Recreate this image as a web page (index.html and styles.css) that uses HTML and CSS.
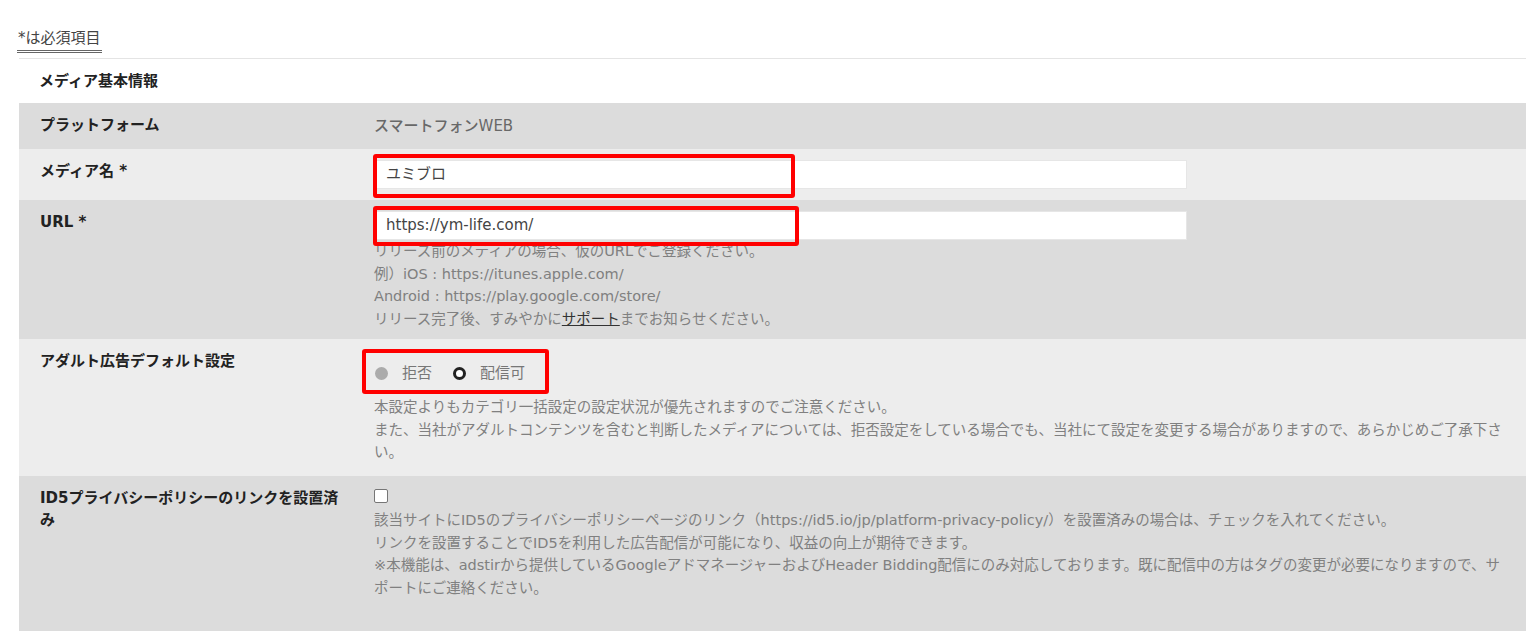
FILE: index.html
```html
<!DOCTYPE html>
<html lang="ja">
<head>
<meta charset="utf-8">
<title>メディア基本情報</title>
<link rel="stylesheet" href="styles.css">
</head>
<body>
<div class="page">
  <div class="note">*は必須項目</div>
  <div class="form">
    <div class="section-title">メディア基本情報</div>

    <div class="row dark">
      <div class="label">プラットフォーム</div>
      <div class="value plain">スマートフォンWEB</div>
    </div>

    <div class="row light">
      <div class="label">メディア名 *</div>
      <div class="value field">
        <div class="input">ユミブロ</div>
        <span class="mark mark-name"></span>
      </div>
    </div>

    <div class="row dark row-url">
      <div class="label">URL *</div>
      <div class="value field">
        <div class="input">https://ym-life.com/</div>
        <div class="help">
          <p>リリース前のメディアの場合、仮のURLでご登録ください。</p>
          <p>例）iOS : https://itunes.apple.com/</p>
          <p>Android : https://play.google.com/store/</p>
          <p>リリース完了後、すみやかに<a class="link">サポート</a>までお知らせください。</p>
        </div>
        <span class="mark mark-url"></span>
      </div>
    </div>

    <div class="row light row-adult">
      <div class="label">アダルト広告デフォルト設定</div>
      <div class="value field">
        <div class="radios">
          <span class="radio radio-off"></span><span class="radio-text">拒否</span>
          <span class="radio radio-on"></span><span class="radio-text">配信可</span>
        </div>
        <div class="help">
          <p>本設定よりもカテゴリ一括設定の設定状況が優先されますのでご注意ください。</p>
          <p>また、当社がアダルトコンテンツを含むと判断したメディアについては、拒否設定をしている場合でも、当社にて設定を変更する場合がありますので、あらかじめご了承下さい。</p>
        </div>
        <span class="mark mark-adult"></span>
      </div>
    </div>

    <div class="row dark row-id5">
      <div class="label">ID5プライバシーポリシーのリンクを設置済み</div>
      <div class="value field">
        <div class="check-line"><span class="checkbox"></span></div>
        <div class="help">
          <p>該当サイトにID5のプライバシーポリシーページのリンク（https://id5.io/jp/platform-privacy-policy/）を設置済みの場合は、チェックを入れてください。</p>
          <p>リンクを設置することでID5を利用した広告配信が可能になり、収益の向上が期待できます。</p>
          <p>※本機能は、adstirから提供しているGoogleアドマネージャーおよびHeader Bidding配信にのみ対応しております。既に配信中の方はタグの変更が必要になりますので、サポートにご連絡ください。</p>
        </div>
      </div>
    </div>
  </div>
</div>
</body>
</html>
```

FILE: styles.css
```css
* { box-sizing: border-box; }

body {
  margin: 0;
  background: #ffffff;
  font-family: "DejaVu Sans", "Noto Sans CJK JP", sans-serif;
  color: #222;
}

.page {
  display: flex;
  flex-direction: column;
  align-items: flex-start;
  padding: 28px 0 0 17px;
}

.note {
  font-size: 15px;
  line-height: 20px;
  color: #444;
  padding: 0 1px 2px 1px;
  border-bottom: 3px double #666;
}

.form {
  margin-top: 5px;
  margin-left: 2px;
  width: 1507px;
  border-top: 1px solid #e4e4e4;
}

.section-title {
  height: 44px;
  line-height: 44px;
  padding-left: 20px;
  font-size: 15px;
  font-weight: 700;
  color: #222;
  background: #fff;
}

.row {
  display: flex;
}

.row.dark { background: #dcdcdc; }
.row.light { background: #ededed; }

.label {
  flex: 0 0 355px;
  width: 355px;
  padding: 11px 29px 12px 21px;
  font-size: 15px;
  font-weight: 700;
  line-height: 22px;
  color: #222;
}

.value {
  flex: 1;
  min-width: 0;
  padding: 12px 20px 12px 0;
  font-size: 14.5px;
  line-height: 22px;
  color: #7c7c7c;
}

.value.plain {
  font-size: 15px;
  color: #686868;
  font-weight: 500;
}

.value.field {
  position: relative;
  padding-top: 11px;
  padding-bottom: 11px;
}

.input {
  width: 813px;
  height: 29px;
  padding-left: 11px;
  background: #fff;
  border: 1px solid #e6e6e6;
  font-size: 15px;
  line-height: 27px;
  color: #444;
}

.help p {
  margin: 0;
  font-size: 14.5px;
  line-height: 22.5px;
  color: #808080;
}

.link {
  color: #333;
  text-decoration: underline;
}

.row-url .value.field { padding-bottom: 9px; }

.row-adult .value.field { padding-bottom: 12.5px; }

.radios {
  display: flex;
  align-items: center;
  height: 46px;
  padding-left: 1px;
}

.radio {
  display: inline-block;
  width: 13px;
  height: 13px;
  border-radius: 50%;
  flex: 0 0 13px;
}

.radio-off {
  background: #ababab;
}

.radio-on {
  background: #fff;
  border: 3px solid #222;
  margin-left: 21px;
}

.radio-text {
  margin-left: 14px;
  font-size: 15px;
  color: #777;
}

.row-id5 .value.field { padding-bottom: 32px; }

.check-line {
  height: 22px;
  display: flex;
  align-items: flex-start;
  padding-top: 2px;
}

.checkbox {
  display: inline-block;
  width: 14px;
  height: 14px;
  background: #fff;
  border: 1px solid #767676;
  border-radius: 2px;
}

.mark {
  position: absolute;
  border: 4px solid #ff0000;
  border-radius: 3px;
  pointer-events: none;
}

.mark-name {
  left: -1px;
  top: 5px;
  width: 422px;
  height: 44px;
}

.mark-url {
  left: -1px;
  top: 6px;
  width: 426px;
  height: 40px;
}

.mark-adult {
  left: -12px;
  top: 10px;
  width: 187px;
  height: 45px;
}
```
